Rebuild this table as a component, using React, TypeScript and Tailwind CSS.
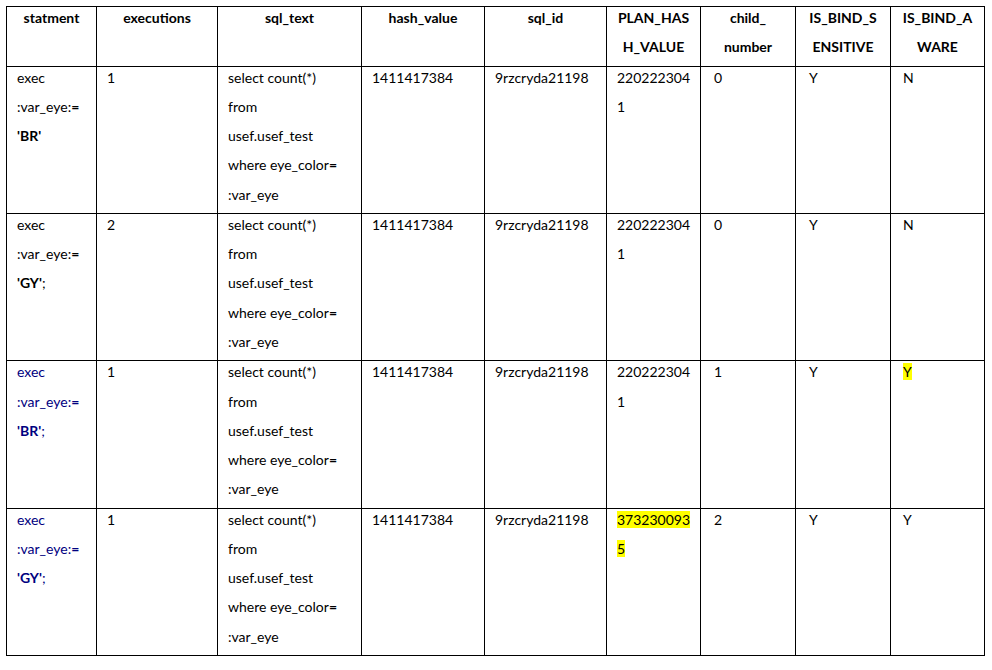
import React from "react";

type Seg = { t: string; b?: boolean; hl?: boolean };
type Line = Seg[];
type Cell = { lines: Line[]; blue?: boolean; pl?: string };

const L = (...segs: (string | Seg)[]): Line =>
  segs.map((s) => (typeof s === "string" ? { t: s } : s));

const widths = ["w-[90px]", "w-[121px]", "w-[144px]", "w-[123px]", "w-[122px]", "w-[94px]", "w-[95px]", "w-[95px]", "w-[94px]"];

const headers: string[][] = [
  ["statment"],
  ["executions"],
  ["sql_text"],
  ["hash_value"],
  ["sql_id"],
  ["PLAN_HAS", "H_VALUE"],
  ["child_", "number"],
  ["IS_BIND_S", "ENSITIVE"],
  ["IS_BIND_A", "WARE"],
];

const sqlLines: Line[] = [
  L("select count(*)"),
  L("from"),
  L("usef.usef_test"),
  L("where eye_color", { t: "=", b: true }),
  L(":var_eye"),
];

const stmt = (val: string, semi: boolean): Line[] => [
  L("exec"),
  L(":var_eye:", { t: "=", b: true }),
  semi ? L({ t: val, b: true }, ";") : L({ t: val, b: true }),
];

const rows: Cell[][] = [
  [
    { lines: stmt("'BR'", false) },
    { lines: [L("1")] },
    { lines: sqlLines },
    { lines: [L("1411417384")] },
    { lines: [L("9rzcryda21198")] },
    { lines: [L("220222304"), L("1")] },
    { lines: [L("0")], pl: "pl-[13px]" },
    { lines: [L("Y")], pl: "pl-[13px]" },
    { lines: [L("N")], pl: "pl-[12px]" },
  ],
  [
    { lines: stmt("'GY'", true) },
    { lines: [L("2")] },
    { lines: sqlLines },
    { lines: [L("1411417384")] },
    { lines: [L("9rzcryda21198")] },
    { lines: [L("220222304"), L("1")] },
    { lines: [L("0")], pl: "pl-[13px]" },
    { lines: [L("Y")], pl: "pl-[13px]" },
    { lines: [L("N")], pl: "pl-[12px]" },
  ],
  [
    { lines: stmt("'BR'", true), blue: true },
    { lines: [L("1")] },
    { lines: sqlLines },
    { lines: [L("1411417384")] },
    { lines: [L("9rzcryda21198")] },
    { lines: [L("220222304"), L("1")] },
    { lines: [L("1")], pl: "pl-[13px]" },
    { lines: [L("Y")], pl: "pl-[13px]" },
    { lines: [L({ t: "Y", hl: true })], pl: "pl-[12px]" },
  ],
  [
    { lines: stmt("'GY'", true), blue: true },
    { lines: [L("1")] },
    { lines: sqlLines },
    { lines: [L("1411417384")] },
    { lines: [L("9rzcryda21198")] },
    { lines: [L({ t: "373230093", hl: true }), L({ t: "5", hl: true })] },
    { lines: [L("2")], pl: "pl-[13px]" },
    { lines: [L("Y")], pl: "pl-[13px]" },
    { lines: [L("Y")], pl: "pl-[12px]" },
  ],
];

function LineView({ line }: { line: Line }) {
  return (
    <div className="h-[29.28px] leading-[22px] whitespace-nowrap">
      {line.map((s, i) => (
        <span
          key={i}
          className={`${s.b ? "font-bold" : ""} ${s.hl ? "bg-[#ffff00]" : ""}`}
        >
          {s.t}
        </span>
      ))}
    </div>
  );
}

export default function App() {
  return (
    <div className="w-[992px] h-[670px] bg-white pt-[6px] pl-[6px]" style={{ fontFamily: "Lato, 'Noto Sans', sans-serif" }}>
      <table className="border-collapse text-[14px] text-black table-fixed w-[979px]">
        <colgroup>
          {widths.map((w, i) => (
            <col key={i} className={w} />
          ))}
        </colgroup>
        <thead>
          <tr>
            {headers.map((h, i) => (
              <th key={i} className="border border-black p-0 align-top text-center font-bold">
                {h.map((t, j) => (
                  <div key={j} className="h-[29.3px] leading-[22px] whitespace-nowrap">
                    {t}
                  </div>
                ))}
                {h.length < 2 && <div className="h-[29.3px]" />}
              </th>
            ))}
          </tr>
        </thead>
        <tbody>
          {rows.map((r, ri) => (
            <tr key={ri}>
              {r.map((c, ci) => (
                <td
                  key={ci}
                  className={`border border-black p-0 align-top ${c.pl ?? "pl-[10px]"} ${c.blue ? "text-[#000080]" : ""}`}
                >
                  {c.lines.map((ln, li) => (
                    <LineView key={li} line={ln} />
                  ))}
                  {Array.from({ length: 5 - c.lines.length }).map((_, k) => (
                    <div key={`e${k}`} className="h-[29.28px]" />
                  ))}
                </td>
              ))}
            </tr>
          ))}
        </tbody>
      </table>
    </div>
  );
}
